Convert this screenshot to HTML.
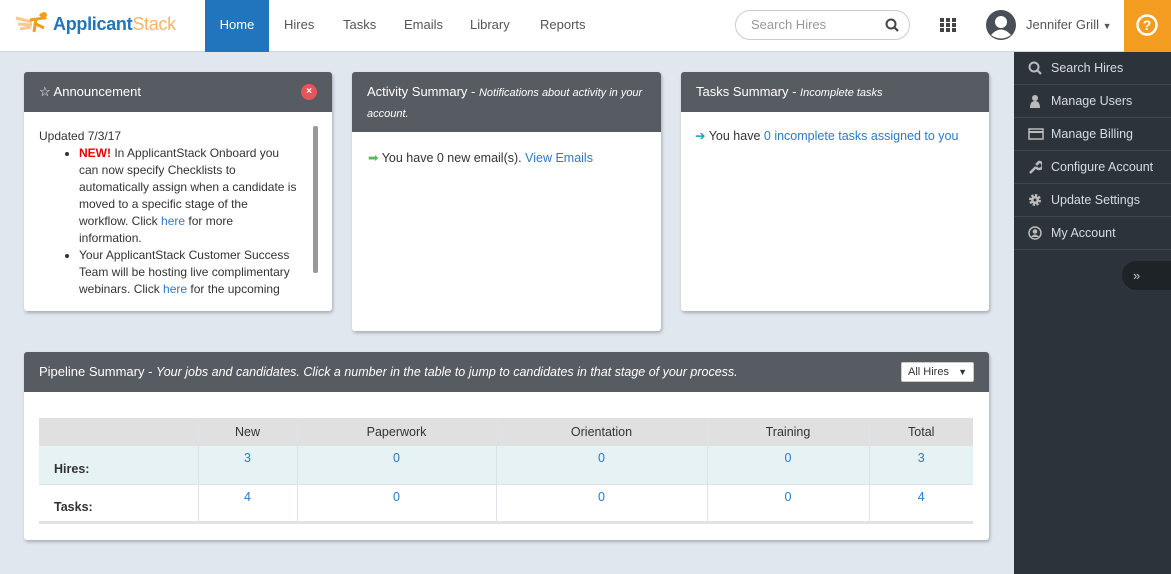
<!DOCTYPE html>
<html><head><style>
*{box-sizing:border-box;margin:0;padding:0}
body{width:1171px;height:574px;overflow:hidden;background:#e1e7ef;font-family:"Liberation Sans",sans-serif;font-size:13px;color:#333;position:relative}
a{color:#2a7ac9;text-decoration:none}
.hdr{position:absolute;left:0;top:0;width:1171px;height:52px;background:#fff;border-bottom:1px solid #cfd6de}
.nav{position:absolute;top:0;height:52px;line-height:50px;color:#555;font-size:13px}
.panel{position:absolute;background:#fff;border-radius:3px;box-shadow:1px 2px 3px rgba(0,0,0,.25);overflow:hidden}
.ph{background:#575c63;color:#fff;height:40px;padding:0 15px;line-height:40px;font-size:13px}
.ph i{font-size:11px}
.side{position:absolute;left:1014px;top:52px;width:157px;height:522px;background:#2c333b}
.si{height:33px;border-bottom:1px solid #3f464e;color:#d8dce0;line-height:32px;padding-left:37px;position:relative;font-size:12.5px}
.si svg{position:absolute;left:14px;top:9px}
table{border-collapse:collapse;position:absolute;left:15px;top:66px;width:934px}
td,th{text-align:center;font-size:12.5px;border-right:1px solid #dde3e8}
th{background:#e0e0e0;height:28px;font-weight:normal;color:#333;vertical-align:middle}
td{vertical-align:top;padding-top:5px}
tr.h td{background:#e6f2f3;height:38px;border-bottom:1px solid #dde3e8}
tr.t td{height:38px;border-bottom:3px solid #e3e3e3}
td.l{text-align:left;padding-left:15px;font-weight:bold;vertical-align:middle;padding-top:8px}
.ann li{white-space:nowrap}
</style></head><body>
<div class="hdr">
 <svg style="position:absolute;left:14px;top:10px" width="40" height="28" viewBox="0 0 40 28"><path d="M2 8 L18 12 M4 14 L18 15 M6 19 L17 17" stroke="#fbc98a" stroke-width="3"/><path d="M16 10 L30 8 L26 4 M22 9 L20 22 M22 14 L30 18" stroke="#f39c1f" stroke-width="3" fill="none"/><circle cx="30" cy="5" r="3" fill="#f39c1f"/></svg>
 <div style="position:absolute;left:53px;top:14px;font-size:18px;font-weight:bold;color:#2175bd;letter-spacing:-.3px">Applicant<span style="color:#fbb36a;font-weight:normal">Stack</span></div>
 <div class="nav" style="left:205px;width:64px;background:#2175bd;color:#fff;text-align:center">Home</div>
 <div class="nav" style="left:284px">Hires</div>
 <div class="nav" style="left:343px">Tasks</div>
 <div class="nav" style="left:404px">Emails</div>
 <div class="nav" style="left:470px">Library</div>
 <div class="nav" style="left:540px">Reports</div>
 <div style="position:absolute;left:735px;top:10px;width:175px;height:30px;border:1px solid #ccc;border-radius:15px;color:#999;line-height:28px;padding-left:15px">Search Hires
  <svg style="position:absolute;right:10px;top:7px" width="14" height="14" viewBox="0 0 14 14"><circle cx="6" cy="6" r="4.5" stroke="#444" stroke-width="2" fill="none"/><path d="M9 9 L13 13" stroke="#444" stroke-width="2.2"/></svg></div>
 <svg style="position:absolute;left:940px;top:18px" width="16" height="14" viewBox="0 0 16 14"><g fill="#444"><rect x="0" y="0" width="4" height="4"/><rect x="6" y="0" width="4" height="4"/><rect x="12" y="0" width="4" height="4"/><rect x="0" y="5" width="4" height="4"/><rect x="6" y="5" width="4" height="4"/><rect x="12" y="5" width="4" height="4"/><rect x="0" y="10" width="4" height="4"/><rect x="6" y="10" width="4" height="4"/><rect x="12" y="10" width="4" height="4"/></g></svg>
 <svg style="position:absolute;left:986px;top:10px" width="30" height="30" viewBox="0 0 30 30"><circle cx="15" cy="15" r="15" fill="#4a4f57"/><circle cx="15" cy="12" r="6" fill="#fff"/><path d="M5 25 Q15 14 25 25 Q15 32 5 25Z" fill="#fff"/></svg>
 <div style="position:absolute;left:1026px;top:17px;color:#555">Jennifer Grill <span style="font-size:9px">▼</span></div>
 <div style="position:absolute;left:1124px;top:0;width:47px;height:52px;background:#f39c1f"><svg style="position:absolute;left:12px;top:14px" width="22" height="22" viewBox="0 0 22 22"><circle cx="11" cy="11" r="9.5" stroke="#fff" stroke-width="2.5" fill="none"/><text x="11" y="16" text-anchor="middle" fill="#fff" font-size="14" font-weight="bold" font-family="Liberation Sans">?</text></svg></div>
</div>

<div class="panel" style="left:24px;top:72px;width:308px;height:239px">
 <div class="ph">☆ Announcement<span style="position:absolute;right:15px;top:12px;width:16px;height:16px;border-radius:8px;background:#e8545a;color:#fff;font-size:10px;line-height:16px;text-align:center;font-weight:bold">×</span></div>
 <div class="ann" style="padding:16px 15px 0;line-height:17px;font-size:12px;color:#333">Updated 7/3/17
  <ul style="padding-left:40px"><li><b style="color:#e00">NEW!</b> In ApplicantStack Onboard you<br>can now specify Checklists to<br>automatically assign when a candidate is<br>moved to a specific stage of the<br>workflow. Click <a>here</a> for more<br>information.</li><li>Your ApplicantStack Customer Success<br>Team will be hosting live complimentary<br>webinars. Click <a>here</a> for the upcoming</li></ul></div>
 <div style="position:absolute;left:289px;top:54px;width:5px;height:147px;background:#999;border-radius:2px"></div>
</div>

<div class="panel" style="left:352px;top:72px;width:309px;height:259px">
 <div class="ph" style="height:60px;line-height:20px;padding-top:10px">Activity Summary - <i>Notifications about activity in your account.</i></div>
 <div style="padding:18px 16px;font-size:12.5px"><span style="color:#5cb85c">➡</span> You have 0 new email(s). <a>View Emails</a></div>
</div>

<div class="panel" style="left:681px;top:72px;width:308px;height:239px">
 <div class="ph">Tasks Summary - <i>Incomplete tasks</i></div>
 <div style="padding:16px 14px;font-size:12.5px"><span style="color:#17a2b8">➔</span> You have <a>0 incomplete tasks assigned to you</a></div>
</div>

<div class="panel" style="left:24px;top:352px;width:965px;height:188px">
 <div class="ph">Pipeline Summary - <i style="font-size:12.5px">Your jobs and candidates. Click a number in the table to jump to candidates in that stage of your process.</i>
  <div style="position:absolute;right:15px;top:10px;width:73px;height:20px;background:#fff;border:1px solid #ccc;border-radius:2px;color:#333;font-size:11px;line-height:18px;padding-left:6px">All Hires <span style="position:absolute;right:6px;font-size:9px">▼</span></div></div>
 <table>
  <tr><th style="width:159px"></th><th style="width:99px">New</th><th style="width:199px">Paperwork</th><th style="width:211px">Orientation</th><th style="width:162px">Training</th><th style="border-right:0">Total</th></tr>
  <tr class="h"><td class="l">Hires:</td><td><a>3</a></td><td><a>0</a></td><td><a>0</a></td><td><a>0</a></td><td style="border-right:0"><a>3</a></td></tr>
  <tr class="t"><td class="l">Tasks:</td><td><a>4</a></td><td><a>0</a></td><td><a>0</a></td><td><a>0</a></td><td style="border-right:0"><a>4</a></td></tr>
 </table>
</div>

<div class="side">
 <div class="si"><svg width="14" height="14" viewBox="0 0 14 14"><circle cx="6" cy="6" r="4.5" stroke="#bbb" stroke-width="2" fill="none"/><path d="M9 9 L13 13" stroke="#bbb" stroke-width="2.2"/></svg>Search Hires</div>
 <div class="si"><svg width="14" height="14" viewBox="0 0 14 14"><circle cx="7" cy="4" r="3" fill="#bbb"/><path d="M2 14 Q2 7 7 7 Q12 7 12 14Z" fill="#bbb"/></svg>Manage Users</div>
 <div class="si"><svg width="16" height="14" viewBox="0 0 16 14"><rect x="1" y="2" width="14" height="10" stroke="#bbb" stroke-width="1.5" fill="none"/><rect x="1" y="4" width="14" height="2" fill="#bbb"/></svg>Manage Billing</div>
 <div class="si"><svg width="14" height="14" viewBox="0 0 14 14"><path d="M2 13 L8 7 M8 7 A3.5 3.5 0 1 0 11 2 L9 4 L10 5" stroke="#bbb" stroke-width="2.5" fill="none"/></svg>Configure Account</div>
 <div class="si"><svg width="14" height="14" viewBox="0 0 14 14"><circle cx="7" cy="7" r="4.5" stroke="#bbb" stroke-width="3" stroke-dasharray="2.2 1.3" fill="none"/><circle cx="7" cy="7" r="4" fill="#bbb"/><circle cx="7" cy="7" r="1.5" fill="#2c333b"/></svg>Update Settings</div>
 <div class="si"><svg width="14" height="14" viewBox="0 0 14 14"><circle cx="7" cy="7" r="6" stroke="#bbb" stroke-width="1.5" fill="none"/><circle cx="7" cy="5.5" r="2.3" fill="#bbb"/><path d="M3 11 Q7 6 11 11" fill="#bbb"/></svg>My Account</div>
 <div style="position:absolute;left:108px;top:209px;width:49px;height:29px;background:#1e2328;border-radius:15px 0 0 15px;color:#ccc;line-height:29px;padding-left:11px;font-size:13px">»</div>
</div>
</body></html>
